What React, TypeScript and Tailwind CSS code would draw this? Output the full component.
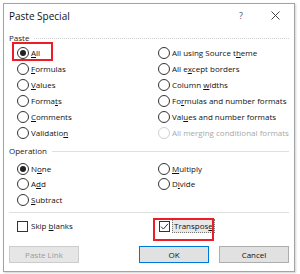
import React from "react";

const U = ({ t, i }: { t: string; i: number }) =>
  i < 0 ? (
    <>{t}</>
  ) : (
    <>
      {t.slice(0, i)}
      <span className="underline underline-offset-1">{t[i]}</span>
      {t.slice(i + 1)}
    </>
  );

const Radio = ({ checked, disabled }: { checked?: boolean; disabled?: boolean }) => (
  <span
    className={
      disabled
        ? "w-[12px] h-[12px] rounded-full border border-[#d0d0d0] bg-white flex items-center justify-center shrink-0"
        : "w-[12px] h-[12px] rounded-full border border-[#333333] bg-white flex items-center justify-center shrink-0"
    }
  >
    {checked && <span className="w-[6px] h-[6px] rounded-full bg-[#222222]" />}
  </span>
);

const Check = ({ checked }: { checked?: boolean }) => (
  <span className="w-[11px] h-[11px] border border-[#333333] bg-white flex items-center justify-center shrink-0">
    {checked && (
      <svg width="9" height="9" viewBox="0 0 9 9">
        <path d="M1 4.6 L3.4 7 L8 1.8" fill="none" stroke="#333333" strokeWidth="1" />
      </svg>
    )}
  </span>
);

const RadioRow = ({
  t,
  i,
  checked,
  disabled,
  h = "h-[16px]",
}: {
  t: string;
  i: number;
  checked?: boolean;
  disabled?: boolean;
  h?: string;
}) => (
  <div className={`${h} flex items-center gap-[2px]`}>
    <Radio checked={checked} disabled={disabled} />
    <span className={disabled ? "text-[#a8a8a8] whitespace-nowrap" : "text-[#111111] whitespace-nowrap"}>
      <U t={t} i={i} />
    </span>
  </div>
);

export default function App() {
  return (
    <div className="w-[300px] h-[274px] bg-white pt-[3px] pl-[3px] font-['Open_Sans','Noto_Sans',sans-serif] text-[8px] leading-none">
      <div className="w-[292px] h-[269px] border border-[#a3a3a3] bg-white shadow-[1px_1px_2px_rgba(0,0,0,0.18)] flex flex-col">
        {/* title bar */}
        <div className="h-[23px] flex items-center pl-[5px] pr-[9px] shrink-0">
          <span className="text-[10px] text-[#111111] flex-1">Paste Special</span>
          <span className="w-[20px] flex justify-center text-[9px] text-[#555555]">?</span>
          <span className="w-[20px] ml-[14px] flex justify-center">
            <svg width="9" height="9" viewBox="0 0 9 9">
              <path d="M0.5 0.5 L8.5 8.5 M8.5 0.5 L0.5 8.5" stroke="#333333" strokeWidth="0.9" />
            </svg>
          </span>
        </div>

        {/* body */}
        <div className="flex flex-col px-[5px] pt-[4px]">
          {/* Paste label */}
          <div className="h-[14px] flex items-center gap-[5px]">
            <span className="text-[#222222]">Paste</span>
            <span className="flex-1 border-t border-dotted border-[#cfcfcf]" />
          </div>
          <div className="grid grid-cols-[141px_1fr] pl-[8px]">
            <div className="flex flex-col">
              <div className="relative">
                <RadioRow t="All" i={0} checked />
                <div className="absolute left-[-5px] top-[-3px] w-[41px] h-[19px] border-2 border-[#ee1c25]" />
              </div>
              <RadioRow t="Formulas" i={0} />
              <RadioRow t="Values" i={0} />
              <RadioRow t="Formats" i={5} />
              <RadioRow t="Comments" i={0} />
              <RadioRow t="Validation" i={9} />
            </div>
            <div className="flex flex-col">
              <RadioRow t="All using Source theme" i={18} />
              <RadioRow t="All except borders" i={5} />
              <RadioRow t="Column widths" i={7} />
              <RadioRow t="Formulas and number formats" i={2} />
              <RadioRow t="Values and number formats" i={3} />
              <RadioRow t="All merging conditional formats" i={-1} disabled />
            </div>
          </div>

          {/* Operation label */}
          <div className="h-[14px] mt-[3px] flex items-center gap-[5px]">
            <span className="text-[#222222]">Operation</span>
            <span className="flex-1 border-t border-[#e0e0e0]" />
          </div>
          <div className="grid grid-cols-[141px_1fr] pl-[8px] mt-[3px]">
            <div className="flex flex-col">
              <RadioRow t="None" i={1} checked h="h-[15.5px]" />
              <RadioRow t="Add" i={1} h="h-[15.5px]" />
              <RadioRow t="Subtract" i={0} h="h-[15.5px]" />
            </div>
            <div className="flex flex-col">
              <RadioRow t="Multiply" i={0} h="h-[15.5px]" />
              <RadioRow t="Divide" i={1} h="h-[15.5px]" />
            </div>
          </div>

          {/* separator */}
          <div className="mt-[4px] border-t border-[#e0e0e0]" />

          {/* checkboxes */}
          <div className="grid grid-cols-[141px_1fr] pl-[8px] mt-[2.5px] h-[22px] items-center">
            <div className="flex items-center gap-[3px]">
              <Check />
              <span className="text-[#111111]">
                <U t="Skip blanks" i={5} />
              </span>
            </div>
            <div className="relative flex items-center">
              <div className="ml-[1px] flex items-center gap-[2px]">
                <Check checked />
                <span className="px-[1px] py-[2px] border border-dotted border-[#777777] bg-[#e8e8e8] text-[#111111]">
                  <U t="Transpose" i={8} />
                </span>
              </div>
              <div className="absolute left-[-5px] top-[-1px] w-[61px] h-[23px] border-2 border-[#ee1c25]" />
            </div>
          </div>

          {/* buttons */}
          <div className="mt-[9px] h-[17px] flex">
            <div className="w-[70px] h-[17px] border border-[#cccccc] bg-[#e6e6e6] flex items-center justify-center text-[#9a9a9a]">
              Paste Link
            </div>
            <div className="flex-1" />
            <div className="w-[70px] h-[17px] border border-[#0078d7] bg-[#e1e1e1] flex items-center justify-center text-[#111111]">
              OK
            </div>
            <div className="w-[70px] h-[17px] ml-[10px] border border-[#adadad] bg-[#e1e1e1] flex items-center justify-center text-[#111111]">
              Cancel
            </div>
          </div>
        </div>
      </div>
    </div>
  );
}
